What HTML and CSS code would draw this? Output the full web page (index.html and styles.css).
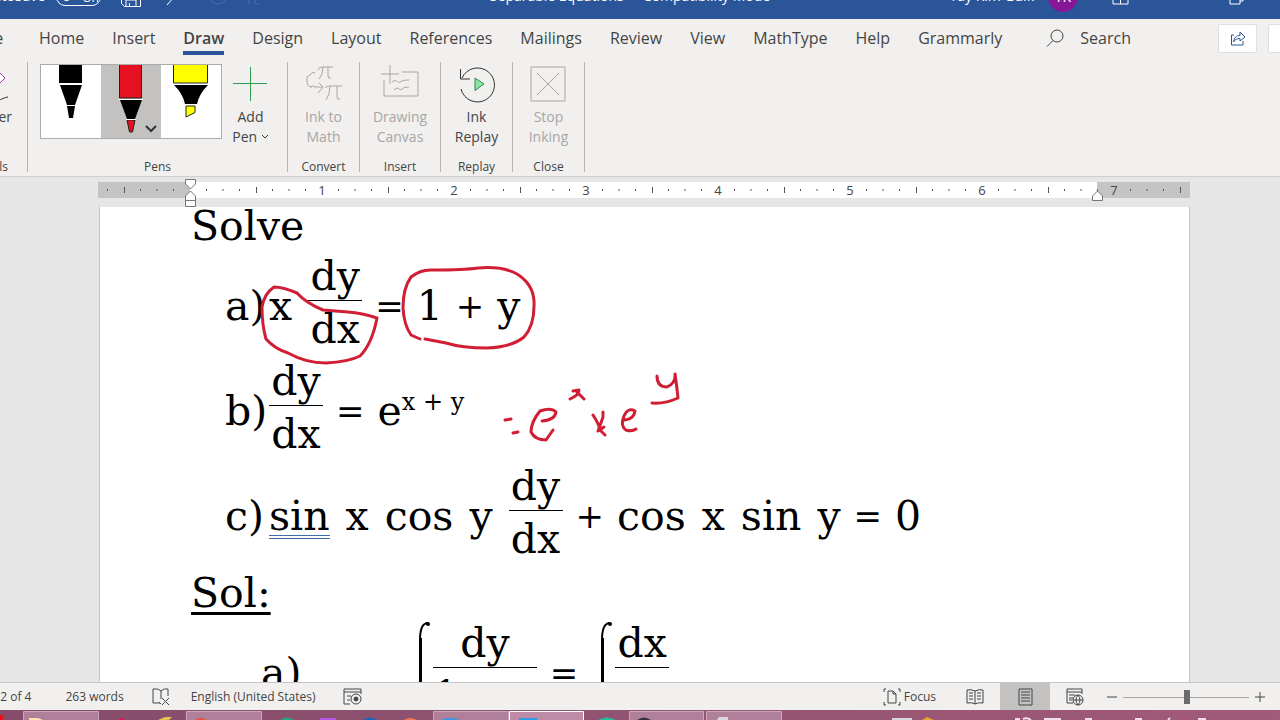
FILE: index.html
```html
<!DOCTYPE html>
<html lang="en">
<head>
    <meta charset="UTF-8">
    <meta name="viewport" content="width=device-width, initial-scale=1.0">
    <title>Separable Equations - Compatibility Mode</title>
    <link rel="stylesheet" href="styles.css">
</head>
<body>
    <header class="titlebar">
        <div class="quick">
            <span class="autosave">AutoSave</span>
            <button class="toggle" aria-label="AutoSave"><span class="knob"></span>On</button>
            <svg class="save" width="22" height="22" viewBox="0 0 22 22"><path d="M1.500 1.500H20.500V20.500H4.500L1.500 17.500ZM6 20V14H16V20M9.500 20V17" /></svg>
            <svg class="pen" width="24" height="24" viewBox="0 0 24 24"><path d="M5 20L20 3" /></svg>
            <svg class="faded" width="60" height="24" viewBox="0 0 60 24"><circle cx="12" cy="10" r="9" /><path d="M38 8H54M43 8V19M49 8V19H53" /></svg>
            <svg class="caret" width="8" height="8" viewBox="0 0 8 8"><path d="M1 2L4 5L7 2" /></svg>
        </div>
        <div class="doc-name">Separable Equations&nbsp; -&nbsp; Compatibility Mode</div>
        <div class="account">
            <span class="user">Tay Kim Guik</span>
            <span class="avatar">TK</span>
            <svg class="mode" width="17" height="16" viewBox="0 0 17 16"><path d="M1 1H16V15H1ZM1 8H16M8.500 8V15" /></svg>
            <svg width="15" height="15" viewBox="0 0 15 15"><path d="M1 4H11V14H1ZM4 4V1H14V11H11" /></svg>
        </div>
    </header>

    <nav class="tabs">
        <a href="#" class="file">File</a>
        <a href="#">Home</a>
        <a href="#">Insert</a>
        <a href="#" class="active">Draw</a>
        <a href="#">Design</a>
        <a href="#">Layout</a>
        <a href="#">References</a>
        <a href="#">Mailings</a>
        <a href="#">Review</a>
        <a href="#">View</a>
        <a href="#">MathType</a>
        <a href="#">Help</a>
        <a href="#">Grammarly</a>
        <button class="search">
            <svg width="18" height="18" viewBox="0 0 18 18"><circle cx="11" cy="7" r="6" /><path d="M7 11.500L1 17.500" /></svg>
            Search
        </button>
        <div class="share-box">
            <button class="share" aria-label="Share">
                <svg width="16" height="16" viewBox="0 0 16 16"><path d="M4 5H1.500V15H13V11M3.500 12C4 7.500 6.500 5.500 10 5.500V2L15 7L10 11V8.500C7 8.500 5 9.500 3.500 12Z" /></svg>
            </button>
            <button class="share" aria-label="Comments"></button>
        </div>
    </nav>

    <section class="ribbon">
        <div class="group tools">
            <button class="tool">
                <svg width="34" height="44" viewBox="0 0 34 44"><path class="eraser" d="M11 16L20 5L31 16L20 27Z" /><path class="dark" d="M16 38C21 34 24 34 24 37C24 40 28 36 34 35" /></svg>
                <span>Eraser</span>
            </button>
            <span class="group-name">Tools</span>
        </div>
        <div class="group pens">
            <div class="group-main">
                <div class="gallery">
                    <button aria-label="Black pen">
                        <svg width="60" height="73" viewBox="0 0 60 73"><path d="M18 0H41V18H18ZM19 20H41L34 40H26ZM26 41H34L32 53H28Z" /></svg>
                    </button>
                    <button class="picked" aria-label="Red pen">
                        <svg width="60" height="73" viewBox="0 0 60 73"><path class="red" d="M18.500 0V33H40.500V0M26 55H34L31.500 67H28.500Z" /><path d="M19 35H41L34 54H26Z" /><path class="white" d="M18 34.500H42M25 54.500H35" /><path class="chev" d="M45 61L50 66L55 61" /></svg>
                    </button>
                    <button aria-label="Yellow highlighter">
                        <svg width="60" height="73" viewBox="0 0 60 73"><path class="yellow" d="M12.500 0V18H46.500V0M25 41V52L34 47.500V41Z" /><path d="M13 20H47Q38 29 36 39H24Q22 29 13 20Z" /></svg>
                    </button>
                </div>
                <button class="tool">
                    <svg width="36" height="44" viewBox="0 0 36 44"><path class="green" d="M18.500 5V39M1 21.500H35" /></svg>
                    <span>Add<br>Pen <svg width="8" height="8" viewBox="0 0 8 8"><path class="dark" d="M1 1L4 4L7 1" /></svg></span>
                </button>
            </div>
            <span class="group-name">Pens</span>
        </div>
        <div class="group convert">
            <button class="tool" disabled>
                <svg width="36" height="44" viewBox="0 0 36 44"><path d="M12 8Q13 5 16 5H27M17 5Q17 13 13 17M22 5V14Q22 17 25 16M19 26Q20 24 23 24H36M24 24Q24 33 20 38M31 24V35Q31 38 34 37M9 11Q6 9 4 13Q0 14 1 19Q1 25 6 25M9 25H17M13 21L17 25L12 31M4 25Q7 23 9 25" /></svg>
                <span>Ink to<br>Math</span>
            </button>
            <span class="group-name">Convert</span>
        </div>
        <div class="group insert">
            <button class="tool" disabled>
                <svg width="40" height="44" viewBox="0 0 40 44"><path d="M22 10H38V34H4V18M10 3V22M1 12H19M12 20C18 16 17 22 20 20S27 18 29 18M14 28C20 23 19 30 22 27S27 26 29 25" /></svg>
                <span>Drawing<br>Canvas</span>
            </button>
            <span class="group-name">Insert</span>
        </div>
        <div class="group replay">
            <button class="tool">
                <svg width="36" height="44" viewBox="0 0 36 44"><path class="dark" d="M2 27A17 17 0 1 0 3 16M1.500 7V17H11" /><path class="play" d="M16 16L25 22L16 28.500Z" /></svg>
                <span>Ink<br>Replay</span>
            </button>
            <span class="group-name">Replay</span>
        </div>
        <div class="group close">
            <button class="tool" disabled>
                <svg width="36" height="44" viewBox="0 0 36 44"><path d="M1 5H35V39H1ZM7 11L29 33M29 11L7 33" /></svg>
                <span>Stop<br>Inking</span>
            </button>
            <span class="group-name">Close</span>
        </div>
    </section>

    <main class="workspace">
        <div class="ruler">
            <svg width="1092" height="30" viewBox="98 177 1092 30">
                <defs>
                    <pattern id="ticks" x="190" y="182" width="132" height="16" patternUnits="userSpaceOnUse">
                        <path class="tick" d="M16.500 7V9M33 7V9M49.500 7V9M66.500 5V11M82.500 7V9M99 7V9M115.500 7V9" />
                    </pattern>
                </defs>
                <rect class="margin" x="98" y="182" width="1092" height="16" />
                <rect class="band" x="190" y="182" width="907" height="16" />
                <rect fill="url(#ticks)" x="98" y="182" width="1092" height="16" />
                <text x="322" y="195">1</text>
                <text x="454" y="195">2</text>
                <text x="586" y="195">3</text>
                <text x="718" y="195">4</text>
                <text x="850" y="195">5</text>
                <text x="982" y="195">6</text>
                <text x="1114" y="195">7</text>
                <path class="marker" d="M185.500 179.500H195.500V184L190.500 189L185.500 184ZM190.500 191L195.500 196V206.500H185.500V196ZM185.500 200.500H195.500M1097.500 191L1102.500 196V200.500H1092.500V196Z" />
            </svg>
        </div>
        <div class="scroll">
            <article class="page">
                <p class="line first">Solve</p>
                <div class="eq">
                    <span class="label">a)</span>
                    <span class="t">x</span>
                    <span class="frac"><span>dy</span><span>dx</span></span>
                    <span class="t op">=</span><span class="t">1</span><span class="t op">+</span><span class="t">y</span>
                </div>
                <div class="eq">
                    <span class="label">b)</span>
                    <span class="frac"><span>dy</span><span>dx</span></span>
                    <span class="t op">=</span><span class="t">e<sup>x + y</sup></span>
                </div>
                <div class="eq">
                    <span class="label">c)</span>
                    <span class="t grammar">sin</span><span class="t">x</span><span class="t">cos</span><span class="t">y</span>
                    <span class="frac"><span>dy</span><span>dx</span></span>
                    <span class="t op">+</span><span class="t">cos</span><span class="t">x</span><span class="t">sin</span><span class="t">y</span><span class="t op">=</span><span class="t">0</span>
                </div>
                <p class="line sol"><u>Sol:</u></p>
                <div class="eq work">
                    <span class="label">a)</span>
                    <span class="integral">
                        <svg width="16" height="98" viewBox="0 0 16 98"><path d="M3.500 98V18" /><path class="hook" d="M3 20Q3 3 11 3" /><circle cx="11" cy="4" r="2" /></svg>
                        <span class="frac"><span>dy</span><span class="sum"><span>1</span><span class="op">+</span><span>y</span></span></span>
                    </span>
                    <span class="t op">=</span>
                    <span class="integral">
                        <svg width="16" height="98" viewBox="0 0 16 98"><path d="M3.500 98V18" /><path class="hook" d="M3 20Q3 3 11 3" /><circle cx="11" cy="4" r="2" /></svg>
                        <span class="frac"><span>dx</span><span>x</span></span>
                    </span>
                </div>
            </article>
            <svg class="ink" width="1280" height="475" viewBox="0 207 1280 475">
                <path d="M297 293Q283 287 274 287Q264 294 262 307Q262 325 266 339Q275 349 288 353Q306 363 326 363Q348 362 360 356Q372 344 377 318Q362 313 348 312L323 310Q306 303 297 293" />
                <path d="M420 339L411 335Q404 325 403 308Q403 288 411 277Q421 269 433 270Q464 270 478 268Q503 266 517 274Q533 284 534 301Q535 325 524 337Q512 347 487 348Q462 348 446 343L425 339" />
                <path d="M505 420L511 419M513 433L518 432M542 421Q555 420 556 412Q551 407 540 411Q531 422 531 432Q535 440 546 440L553 430M570 399Q579 395 579 390L573 391M577 392L584 399M593 415Q599 424 600 430L605 435M603 412V417Q600 426 598 431L604 427M625 420Q634 419 635 411Q628 407 624 416Q620 426 626 430Q632 432 636 429M657 376Q657 387 667 387Q676 383 675 374Q677 388 678 398Q665 404 652 403" />
            </svg>
        </div>
    </main>

    <footer class="status">
        <span class="page-count">Page 2 of 4</span>
        <span>263 words</span>
        <svg width="18" height="18" viewBox="0 0 18 18"><path d="M9 3Q6 0 1 1V15H8M9 3V11M9 3Q12 0 16 1V8M10 10L17 17M17 10L10 17M9 16L7 14" /></svg>
        <span class="lang">English (United States)</span>
        <svg width="20" height="18" viewBox="0 0 20 18"><path d="M1 1H18V4H1ZM1 4V16H7M4 8H8M4 12H7M18 4V6" /><circle cx="13" cy="11" r="5" /><circle class="dot" cx="13" cy="11" r="2" /></svg>
        <div class="views">
            <button class="focus">
                <svg width="18" height="18" viewBox="0 0 18 18"><path d="M5 3H10L13 6V15H5ZM10 3V6H13M1 4V1H3M15 1H17V4M1 14V17H3M15 17H17V14" /></svg>
                Focus
            </button>
            <button class="view" aria-label="Read mode">
                <svg width="18" height="18" viewBox="0 0 18 18"><path d="M9 3Q5 1 1 2V15Q6 14 9 16Q12 14 17 15V2Q13 1 9 3ZM9 3V16M3 5H7M3 8H7M3 11H7M11 5H15M11 8H15M11 11H15" /></svg>
            </button>
            <button class="view on" aria-label="Print layout">
                <svg width="18" height="18" viewBox="0 0 18 18"><path d="M3 1H16V17H3ZM5 4H14M5 7H14M5 10H14M5 13H14" /></svg>
            </button>
            <button class="view" aria-label="Web layout">
                <svg width="18" height="18" viewBox="0 0 18 18"><path d="M7 15H1V1H16V6M1 4H16M3 7H9M3 10H7M3 12H6" /><circle cx="12" cy="12" r="5" /><path d="M7 12H17M12 7Q8 12 12 17M12 7Q16 12 12 17" /></svg>
            </button>
            <div class="zoom">
                <button aria-label="Zoom out"><svg width="10" height="10" viewBox="0 0 10 10"><path d="M0 5H10" /></svg></button>
                <input type="range" min="0" max="100" value="51" aria-label="Zoom">
                <button aria-label="Zoom in"><svg width="10" height="10" viewBox="0 0 10 10"><path d="M0 5H10M5 0V10" /></svg></button>
            </div>
        </div>
    </footer>

    <div class="taskbar">
        <svg width="1280" height="10" viewBox="0 0 1280 10">
            <path class="open" d="M23.500 11V1.500H98.500V11M186.500 11V1.500H261.500V11M433.500 11V1.500H508.500V11M629.500 11V1.500H703.500V11M706.500 11V1.500H781.500V11" />
            <path class="current" d="M509.500 11V1.500H583.500V11" />
            <path fill="#e8101c" d="M0 5H3V10H0Z" />
            <path fill="#ffe3b0" d="M29 8H38L43 10H29Z" />
            <path fill="#d81b50" d="M117 10L121 8L126 10Z" />
            <path fill="#e6c34a" d="M158 10L165 7H172L169 10Z" />
            <path fill="#e84f3d" d="M195 10Q201 6 207 10Z" />
            <path fill="#24a876" d="M280 10Q287 5 294 10Z" />
            <path fill="#b557e8" d="M320 8H336V10H320Z" />
            <path fill="#1166c0" d="M363 10Q370 5 377 10Z" />
            <path fill="#f47752" d="M404 10Q410 6 417 10Z" />
            <path fill="#2f9be8" d="M441 10Q450 6 460 10ZM519 8H537V10H519Z" />
            <path fill="#24bda0" d="M598 10Q607 5 616 10Z" />
            <path fill="#36323c" d="M637 10Q644 5 651 10Z" />
            <path fill="#d8d8dc" d="M717 10L719 7H728V10ZM892 8H912V10H892Z" />
            <path fill="#e5a62e" d="M922 10L927 7L934 10Z" />
            <path class="tray" d="M1015 9H1020M1023 9Q1027 7 1031 10M1044 9H1061M1085 9H1092M1135 9H1142M1170 8L1168 10M1198 9H1206" />
        </svg>
    </div>
</body>
</html>
```
FILE: styles.css
```css
* {
    box-sizing: border-box;
}
body {
    display: flex;
    flex-direction: column;
    margin: 0;
    height: 100vh;
    overflow: hidden;
    font-family: "Open Sans", "Noto Sans", sans-serif;
    font-size: 12px;
    color: #444444;
    background: #e6e6e6;
}
button {
    margin: 0;
    padding: 0;
    border: 0;
    background: none;
    font: inherit;
    color: inherit;
}
svg {
    display: block;
    flex: none;
    fill: none;
    stroke: currentColor;
}
a {
    color: inherit;
    text-decoration: none;
}

/* title bar */
.titlebar {
    display: grid;
    grid-template-columns: 1fr auto 1fr;
    grid-template-rows: 19px;
    align-items: end;
    flex: none;
    height: 19px;
    padding-right: 20px;
    background: #2a5699;
    color: #ffffff;
}
.titlebar > div {
    display: flex;
    align-items: center;
    height: 44px;
    font-size: 14px;
}
.titlebar .doc-name, .autosave, .user {
    padding-bottom: 3px;
}
.autosave {
    margin-left: -16px;
}
.toggle {
    display: flex;
    align-items: center;
    gap: 12px;
    width: 45px;
    height: 18px;
    margin: 0 19px 0 11px;
    padding-left: 6px;
    border: 1px solid #ffffff;
    border-radius: 9px;
    font-size: 12px;
}
.knob {
    width: 7px;
    height: 7px;
    border-radius: 50%;
    background: #ffffff;
}
.save {
    margin-right: 20px;
}
.pen {
    margin-right: 20px;
}
.faded {
    opacity: 0.15;
}
.caret {
    margin-left: 30px;
}
.account {
    justify-content: flex-end;
    gap: 14px;
    padding-right: 16px;
}
.avatar {
    width: 30px;
    height: 30px;
    border-radius: 50%;
    background: #881798;
    text-align: center;
    line-height: 30px;
}
.mode {
    margin: 0 86px 0 20px;
}

/* tabs */
.tabs {
    display: flex;
    align-items: center;
    flex: none;
    gap: 28px;
    height: 38px;
    margin-left: -22px;
    background: #f1f0ef;
    font-size: 16px;
}
.tabs a {
    height: 38px;
    line-height: 38px;
}
.file {
    width: 33px;
}
.tabs .active {
    font-weight: 600;
    background: linear-gradient(#2a5699, #2a5699) 0 32px / 100% 4px no-repeat;
}
.search {
    display: flex;
    align-items: center;
    gap: 16px;
    margin-left: 16px;
}
.share-box {
    display: flex;
    gap: 11px;
    margin-left: auto;
    margin-right: -27px;
}
.share {
    display: flex;
    align-items: center;
    justify-content: center;
    width: 39px;
    height: 29px;
    border: 1px solid #e1dfdd;
    border-radius: 2px;
    background: #ffffff;
    color: #2a5699;
}

/* ribbon */
.ribbon {
    display: flex;
    flex: none;
    height: 120px;
    padding: 5px 0 4px;
    border-bottom: 1px solid #cfcfcf;
    background: #f1f0ef;
}
.group {
    display: flex;
    flex-direction: column;
    align-items: center;
    justify-content: space-between;
    flex: none;
    border-right: 1px solid #b5b3b1;
}
.group-name {
    line-height: 10px;
}
.tools {
    align-items: flex-end;
    width: 28px;
    padding-right: 15px;
}
.tools .group-name {
    margin-right: 4px;
}
.pens {
    width: 260px;
}
.group-main {
    display: flex;
    gap: 10px;
    padding-right: 6px;
}
.convert, .replay, .close {
    width: 72px;
}
.insert {
    width: 81px;
}
.gallery {
    display: flex;
    width: 182px;
    height: 75px;
    margin-top: 2px;
    border: 1px solid #ababab;
    background: #ffffff;
}
.gallery svg {
    fill: #000000;
    stroke: none;
}
.picked {
    background: #c3c2c1;
}
.gallery .red {
    fill: #e51020;
    stroke: #222222;
}
.gallery .yellow {
    fill: #ffff00;
    stroke: #222222;
}
.gallery .white {
    stroke: #ffffff;
    stroke-width: 1;
}
.gallery .chev {
    fill: none;
    stroke: #333333;
    stroke-width: 2;
}
.tool {
    display: flex;
    flex-direction: column;
    align-items: center;
    font-size: 14px;
    line-height: 20px;
}
.tool > span {
    padding-top: 1px;
}
.tool span svg {
    display: inline-block;
    vertical-align: middle;
}
.tool:disabled {
    color: #a8a6a4;
}
.eraser {
    stroke: #9b3fa8;
    fill: #ffffff;
}
.dark {
    stroke: #333333;
    stroke-width: 1;
}
.green {
    stroke: #2f9c52;
    stroke-width: 1;
}
.play {
    fill: #8fe3a5;
    stroke: #2f8c52;
}

/* ruler and page */
.workspace {
    display: flex;
    flex-direction: column;
    flex: 1;
    min-height: 0;
}
.ruler {
    height: 30px;
    padding-left: 98px;
}
.margin {
    fill: #c4c4c4;
    stroke: none;
}
.band {
    fill: #ffffff;
    stroke: none;
}
.ruler rect {
    stroke: none;
}
.tick {
    stroke: #555555;
}
.ruler text {
    fill: #444444;
    stroke: none;
    font-size: 13px;
    text-anchor: middle;
}
.marker {
    fill: #ffffff;
    stroke: #777777;
}
.scroll {
    position: relative;
    flex: 1;
    min-height: 0;
    overflow: hidden;
}
.page {
    display: flow-root;
    height: 100%;
    margin: 0 90px 0 99px;
    padding-left: 91px;
    border: solid #c6c6c6;
    border-width: 0 1px;
    background: #ffffff;
    color: #000000;
    font-family: "DejaVu Serif", serif;
    font-size: 41px;
    line-height: 48px;
    white-space: nowrap;
}
.line {
    margin: 0;
}
.first {
    margin-top: -5px;
}
.sol {
    margin-top: 4px;
}
.sol u {
    text-decoration-thickness: 3px;
    text-underline-offset: 5px;
}
.eq {
    display: flex;
    align-items: center;
    gap: 16px;
    height: 105px;
    padding-left: 34px;
}
.label {
    width: 44px;
    margin-right: -16px;
    padding-top: 6px;
}
.t {
    padding-top: 6px;
}
.op {
    margin: 0 -3px;
    font-size: 34px;
}
.eq sup {
    font-size: 24px;
    line-height: 0;
}
.frac {
    display: flex;
    flex-direction: column;
    min-width: 54px;
    text-align: center;
}
.frac > span:first-child {
    border-bottom: 1px solid #000000;
}
.frac > span:last-child {
    padding-top: 4px;
}
.sum {
    display: flex;
    gap: 16px;
}
.grammar {
    background: linear-gradient(#3f6db0, #3f6db0) 0 49px / 100% 1px no-repeat, linear-gradient(#3f6db0, #3f6db0) 0 52px / 100% 1px no-repeat;
}
.work {
    height: 104px;
    padding-left: 70px;
}
.work .label {
    width: 132px;
    margin-right: 0;
}
.work .label, .work .t {
    padding-top: 8px;
}
.integral {
    display: flex;
    align-items: center;
    margin-left: 8px;
}
.integral svg {
    stroke: #000000;
    stroke-width: 3;
}
.integral .hook {
    stroke-width: 2;
}
.integral circle {
    fill: #000000;
    stroke: none;
}
.ink {
    position: absolute;
    top: 0;
    left: 0;
    stroke: #d01f35;
    stroke-width: 3;
    stroke-linecap: round;
    stroke-linejoin: round;
}

/* status bar */
.status {
    display: flex;
    align-items: center;
    flex: none;
    height: 28px;
    border-top: 1px solid #c6c6c6;
    background: #f1f0ef;
    white-space: nowrap;
}
.page-count {
    margin: 0 34px 0 -30px;
}
.status > svg {
    margin: 0 21px 0 28px;
}
.dot {
    fill: #444444;
}
.views {
    display: flex;
    align-items: center;
    align-self: stretch;
    margin-left: auto;
}
.focus {
    display: flex;
    align-items: center;
    gap: 3px;
    margin-right: 14px;
}
.view {
    display: flex;
    align-items: center;
    justify-content: center;
    align-self: stretch;
    width: 50px;
}
.on {
    background: #c3c2c1;
}
.zoom {
    display: flex;
    align-items: center;
    gap: 6px;
    margin: 0 15px 0 7px;
}
.zoom input {
    appearance: none;
    width: 126px;
    height: 20px;
    margin: 0;
    background: linear-gradient(#a5a3a1, #a5a3a1) 0 10px / 100% 1px no-repeat;
}
.zoom input::-webkit-slider-thumb {
    appearance: none;
    width: 6px;
    height: 14px;
    background: #6b6b6b;
}

.taskbar {
    flex: none;
    height: 10px;
    overflow: hidden;
    background: linear-gradient(90deg, #854c6a, #a05b78);
}
.taskbar svg {
    stroke: none;
}
.open {
    fill: #b0809a;
    stroke: #c9a5b8;
}
.current {
    fill: #bd8ba5;
    stroke: #ffffff;
}
.tray {
    stroke: #f2dfe8;
    stroke-width: 2;
}
```
